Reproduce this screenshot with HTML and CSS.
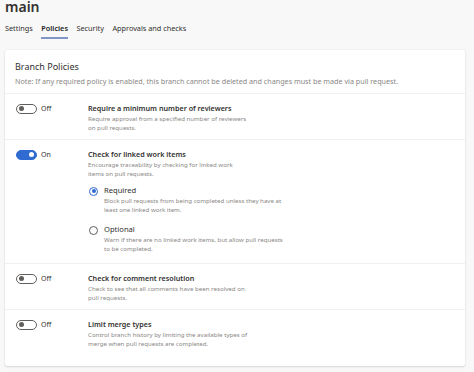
FILE: index.html
```html
<!DOCTYPE html>
<html>
<head>
<meta charset="utf-8">
<link rel="stylesheet" href="styles.css">
</head>
<body>
<div class="page">
  <h1 class="title">main</h1>
  <nav class="tabs">
    <span class="tab">Settings</span>
    <span class="tab active">Policies</span>
    <span class="tab">Security</span>
    <span class="tab">Approvals and checks</span>
  </nav>
  <section class="card">
    <header class="card-head">
      <div class="card-title">Branch Policies</div>
      <div class="card-note">Note: If any required policy is enabled, this branch cannot be deleted and changes must be made via pull request.</div>
    </header>
    <div class="policy">
      <div class="switch-col"><span class="toggle"></span><span class="state">Off</span></div>
      <div class="body">
        <div class="ptitle">Require a minimum number of reviewers</div>
        <div class="pdesc">Require approval from a specified number of reviewers<br>on pull requests.</div>
      </div>
    </div>
    <div class="policy">
      <div class="switch-col"><span class="toggle on"></span><span class="state">On</span></div>
      <div class="body">
        <div class="ptitle">Check for linked work items</div>
        <div class="pdesc">Encourage traceability by checking for linked work<br>items on pull requests.</div>
        <div class="options">
          <div class="option">
            <span class="radio checked"></span>
            <div>
              <div class="olabel">Required</div>
              <div class="odesc">Block pull requests from being completed unless they have at<br>least one linked work item.</div>
            </div>
          </div>
          <div class="option">
            <span class="radio"></span>
            <div>
              <div class="olabel">Optional</div>
              <div class="odesc">Warn if there are no linked work items, but allow pull requests<br>to be completed.</div>
            </div>
          </div>
        </div>
      </div>
    </div>
    <div class="policy">
      <div class="switch-col"><span class="toggle"></span><span class="state">Off</span></div>
      <div class="body">
        <div class="ptitle">Check for comment resolution</div>
        <div class="pdesc">Check to see that all comments have been resolved on<br>pull requests.</div>
      </div>
    </div>
    <div class="policy last">
      <div class="switch-col"><span class="toggle"></span><span class="state">Off</span></div>
      <div class="body">
        <div class="ptitle">Limit merge types</div>
        <div class="pdesc">Control branch history by limiting the available types of<br>merge when pull requests are completed.</div>
      </div>
    </div>
  </section>
</div>
</body>
</html>
```
FILE: styles.css
```css
* { box-sizing: border-box; }
html, body { margin: 0; padding: 0; }
body {
  background: #f8f8f8;
  font-family: "Noto Sans", "Open Sans", sans-serif;
  color: #323130;
  width: 474px;
  height: 372px;
  overflow: hidden;
}
.page { padding: 0 8px 0 5px; }
.title {
  margin: -2px 0 0 0;
  font-size: 14px;
  font-weight: 600;
  line-height: 18px;
}
.tabs {
  display: flex;
  gap: 8.5px;
  margin-top: 5px;
  font-size: 7.3px;
  height: 21px;
}
.tab {
  line-height: 14px;
  position: relative;
  color: #323130;
}
.tab.active { font-weight: 600; color: #201f1e; }
.tab.active::after {
  content: "";
  position: absolute;
  left: 0; right: 0;
  top: 16px;
  height: 1.5px;
  background: #8096c9;
}
.card {
  margin-top: 8px;
  background: #fff;
  border-radius: 2px;
  box-shadow: 0 0 1px rgba(0,0,0,0.18), 0 1px 2px rgba(0,0,0,0.12);
  margin-right: 1px;
  height: 316px;
}
.card-head {
  padding: 11px 10px 7px 10px;
  border-bottom: 1px solid #f0f0f0;
}
.card-title {
  font-size: 9px;
  line-height: 12px;
}
.card-note {
  margin-top: 3px;
  font-size: 7.2px;
  line-height: 10px;
  color: #8a8886;
  white-space: nowrap;
}
.policy {
  display: flex;
  padding: 8px 0 7px 11px;
  border-bottom: 1px solid #f0f0f0;
}
.policy.last { border-bottom: none; }
.switch-col {
  width: 72px;
  display: flex;
  align-items: center;
  height: 11px;
  gap: 4px;
  flex: none;
  margin-top: 1px;
}
.toggle {
  width: 21px;
  height: 10px;
  border: 1px solid #605e5c;
  border-radius: 6px;
  position: relative;
  background: #fff;
}
.toggle::after {
  content: "";
  position: absolute;
  top: 1.5px;
  left: 2px;
  width: 5px;
  height: 5px;
  border-radius: 50%;
  background: #605e5c;
}
.toggle.on { background: #2f6bd0; border-color: #2f6bd0; }
.toggle.on::after { left: auto; right: 2px; background: #fff; }
.state { font-size: 7px; color: #323130; }
.body { width: 200px; }
.ptitle {
  font-size: 7.2px;
  font-weight: 600;
  line-height: 12px;
  white-space: nowrap;
}
.pdesc, .odesc {
  font-size: 6.15px;
  line-height: 9px;
  color: #8a8886;
  white-space: nowrap;
}
.options {
  margin-top: 7px;
  margin-bottom: 3px;
  padding-left: 1px;
}
.option { display: flex; gap: 6px; }
.option + .option { margin-top: 10px; }
.radio {
  flex: none;
  width: 9px;
  height: 9px;
  border-radius: 50%;
  border: 1px solid #605e5c;
  margin-top: 1.5px;
  position: relative;
  background: #fff;
}
.radio.checked { border-color: #2f6bd0; }
.radio.checked::after {
  content: "";
  position: absolute;
  left: 1.5px; top: 1.5px;
  width: 4px; height: 4px;
  border-radius: 50%;
  background: #2f6bd0;
}
.olabel { font-size: 7.6px; line-height: 11px; }
```
